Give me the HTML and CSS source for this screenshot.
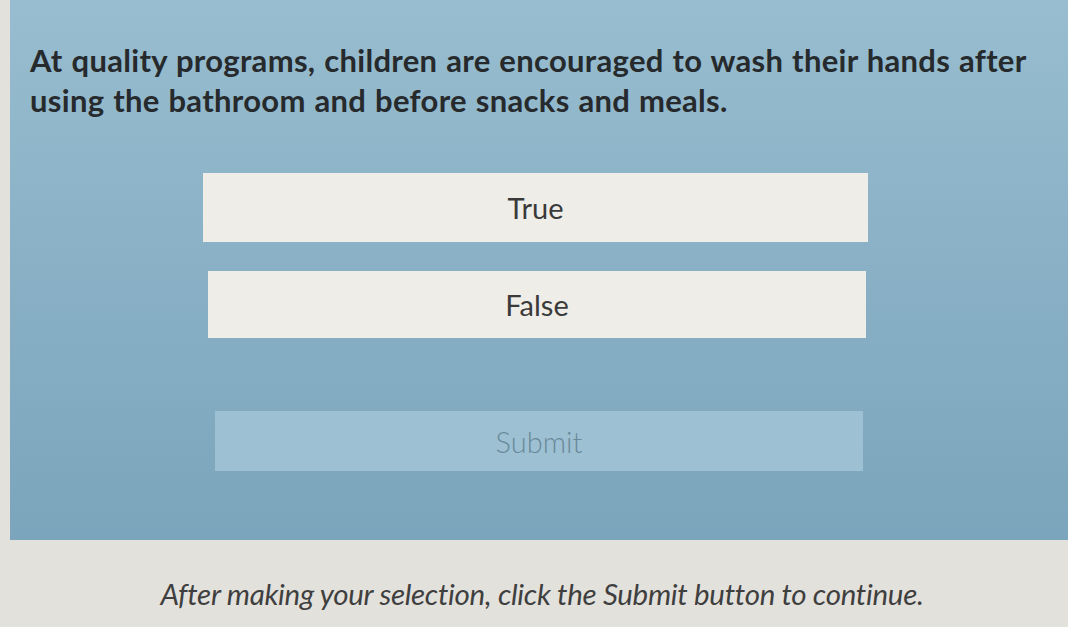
FILE: index.html
```html
<!DOCTYPE html>
<html>
<head>
    <title>Knowledge Check</title>
    <link rel="stylesheet" href="styles.css">
</head>
<body>
    <div class="question">
        <h1>At quality programs, children are encouraged to wash their hands after using the bathroom and before snacks and meals.</h1>

        <div class="choices">
            <button class="choice choice-true">True</button>
            <button class="choice choice-false">False</button>
            <button class="submit" disabled>Submit</button>
        </div>
    </div>

    <div class="footer">
        <p>After making your selection, click the Submit button to continue.</p>
    </div>
</body>
</html>
```

FILE: styles.css
```css
body {
    font-family: Lato, "Open Sans", sans-serif;
    margin: 0;
    padding: 0;
    background-color: #e3e1dc;
    color: #2b2b2b;
}

.question {
    height: 540px;
    box-sizing: border-box;
    margin-left: 10px;
    padding: 40px 20px 0 20px;
    background: linear-gradient(180deg, #98bdd0 0%, #89b0c5 50%, #7ba5bc 100%);
}

.question h1 {
    max-width: 1020px;
    margin: 0;
    font-size: 31px;
    font-weight: 700;
    line-height: 40px;
    color: #262a2c;
    letter-spacing: 0.3px;
    word-spacing: 1px;
}

.choices {
    width: 665px;
    margin: 53px 0 0 173px;
    display: flex;
    flex-direction: column;
}

.choice,
.submit {
    font-family: Lato, "Open Sans", sans-serif;
    border: none;
    padding: 0;
    text-align: center;
    cursor: pointer;
}

.choice {
    height: 69px;
    background-color: #efede8;
    color: #3a3a3a;
    font-size: 29px;
    font-weight: 400;
}

.choice-false {
    width: 658px;
    height: 67px;
    margin-top: 29px;
    margin-left: 5px;
}

.submit {
    width: 648px;
    height: 60px;
    margin-top: 73px;
    margin-left: 12px;
    background-color: #9dc1d2;
    color: #6a8a9b;
    font-size: 29px;
    font-weight: 300;
}

.footer {
    text-align: center;
    padding-top: 36px;
}

.footer p {
    margin: 0 0 0 16px;
    font-size: 29.5px;
    font-style: italic;
    color: #3f3f3f;
    letter-spacing: -0.3px;
}
```
